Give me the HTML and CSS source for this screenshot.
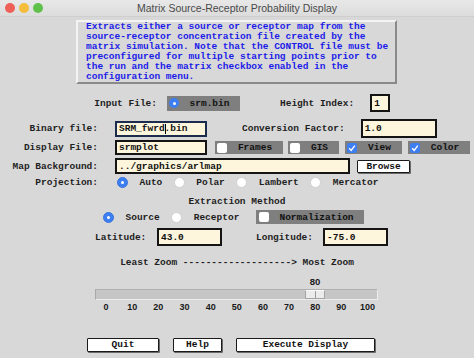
FILE: index.html
```html
<!DOCTYPE html>
<html lang="en">
<head>
    <meta charset="UTF-8">
    <title>Matrix Source-Receptor Probability Display</title>
    <link rel="stylesheet" href="styles.css">
</head>
<body>
    <div class="titlebar">
        <div class="lights">
            <span class="light red"></span>
            <span class="light yellow"></span>
            <span class="light green"></span>
        </div>
        <div class="title">Matrix Source-Receptor Probability Display</div>
    </div>

    <div class="window">
        <div class="desc">Extracts either a source or receptor map from the<br>source-receptor concentration file created by the<br>matrix simulation. Note that the CONTROL file must be<br>preconfigured for multiple starting points prior to<br>the run and the matrix checkbox enabled in the<br>configuration menu.</div>

        <div class="row row-input">
            <span class="lbl lbl-input">Input File:</span>
            <div class="pick pick-srm"><span class="radio on"></span><span class="pick-text">srm.bin</span></div>
            <span class="lbl-height">Height Index:</span>
            <div class="entry entry-height">1</div>
        </div>

        <div class="row row-binary">
            <span class="lbl">Binary file:</span>
            <div class="entry entry-file focus">SRM_fwrd<span class="caret"></span>.bin</div>
            <span class="lbl-conv">Conversion Factor:</span>
            <div class="entry entry-conv">1.0</div>
        </div>

        <div class="row row-display">
            <span class="lbl">Display File:</span>
            <div class="entry entry-file entry-display">srmplot</div>
            <div class="pick pick-frames"><span class="check"></span><span class="pick-text">Frames</span></div>
            <div class="pick pick-gis"><span class="check"></span><span class="pick-text">GIS</span></div>
            <div class="pick pick-view"><span class="check on"><svg width="10" height="10" viewBox="0 0 10 10"><polyline points="2.2,5.2 4.2,7.4 7.8,2.6" fill="none" stroke="#fff" stroke-width="1.4"/></svg></span><span class="pick-text">View</span></div>
            <div class="pick pick-color"><span class="check on"><svg width="10" height="10" viewBox="0 0 10 10"><polyline points="2.2,5.2 4.2,7.4 7.8,2.6" fill="none" stroke="#fff" stroke-width="1.4"/></svg></span><span class="pick-text">Color</span></div>
        </div>

        <div class="row row-map">
            <span class="lbl">Map Background:</span>
            <div class="entry entry-map">../graphics/arlmap</div>
            <button class="btn btn-browse">Browse</button>
        </div>

        <div class="row row-proj">
            <span class="lbl">Projection:</span>
            <span class="radio on first"></span><span class="opt-text">Auto</span>
            <span class="radio"></span><span class="opt-text">Polar</span>
            <span class="radio"></span><span class="opt-text">Lambert</span>
            <span class="radio"></span><span class="opt-text">Mercator</span>
        </div>

        <div class="row row-center row-method">Extraction Method</div>

        <div class="row row-source">
            <span class="radio on source"></span><span class="opt-text">Source</span>
            <span class="radio"></span><span class="opt-text">Receptor</span>
            <div class="pick pick-norm"><span class="check"></span><span class="pick-text">Normalization</span></div>
        </div>

        <div class="row row-latlon">
            <span class="lbl-lat">Latitude:</span>
            <div class="entry entry-lat">43.0</div>
            <span class="lbl-lon">Longitude:</span>
            <div class="entry entry-lon">-75.0</div>
        </div>

        <div class="row row-center row-zoom">Least Zoom -------------------&gt; Most Zoom</div>

        <div class="slider">
            <div class="slider-value">80</div>
            <div class="trough"><div class="thumb"></div></div>
            <div class="ticks">
                <span>0</span><span>10</span><span>20</span><span>30</span><span>40</span><span>50</span>
                <span>60</span><span>70</span><span>80</span><span>90</span><span>100</span>
            </div>
        </div>

        <div class="row row-buttons">
            <button class="btn btn-quit">Quit</button>
            <button class="btn btn-help">Help</button>
            <button class="btn btn-exec">Execute Display</button>
        </div>
    </div>
</body>
</html>
```

FILE: styles.css
```css
body {
    margin: 0;
    width: 474px;
    height: 358px;
    overflow: hidden;
    background-color: #d8d8d8;
    font-family: "Liberation Mono", monospace;
    font-weight: bold;
    font-size: 9.5px;
    color: #1e1e1e;
}

/* window title bar */
.titlebar {
    height: 17px;
    display: grid;
    grid-template-columns: 1fr auto 1fr;
    align-items: center;
    background: linear-gradient(#e8e8e8, #dcdcdc);
    border-bottom: 1px solid #cfcfcf;
    box-sizing: border-box;
}
.lights {
    display: flex;
    gap: 4px;
    padding-left: 5px;
}
.light {
    width: 10px;
    height: 10px;
    border-radius: 50%;
}
.red { background-color: #ee5f57; }
.yellow { background-color: #f4bd3b; }
.green { background-color: #5fc14a; }
.title {
    font-family: "Liberation Sans", sans-serif;
    font-weight: normal;
    font-size: 10.5px;
    color: #4a4a4a;
}

.window {
    display: flex;
    flex-direction: column;
}

.desc {
    margin: 3px 0 0 76px;
    width: 321px;
    height: 64px;
    box-sizing: border-box;
    padding-left: 8px;
    border: 2px solid;
    border-color: #f4f4f4 #8a8a8a #8a8a8a #f4f4f4;
    color: #1c1ce8;
    line-height: 10px;
    white-space: nowrap;
}

.row {
    display: flex;
    align-items: center;
    flex: none;
}
.row-center {
    justify-content: center;
}
.lbl {
    width: 98px;
    text-align: right;
    flex: none;
}

.entry {
    box-sizing: border-box;
    background-color: #fdf6dc;
    border: 2px solid #141414;
    padding-left: 2px;
    display: flex;
    align-items: center;
    flex: none;
    color: #111;
}
.entry.focus {
    border-color: #1d2b4c;
}
.caret {
    display: inline-block;
    width: 0;
    height: 10px;
    border-left: 1px solid #000;
    margin-right: -1px;
}

.pick {
    display: flex;
    align-items: center;
    background-color: #7f7f7f;
    padding-left: 2px;
    box-sizing: border-box;
    flex: none;
    color: #111;
}
.pick-text {
    flex: 1;
    text-align: center;
}
.check {
    width: 10px;
    height: 10px;
    border-radius: 2px;
    background-color: #fff;
    display: flex;
    flex: none;
}
.check.on {
    background-color: #3d7ef0;
}

.radio {
    width: 11px;
    height: 11px;
    border-radius: 50%;
    background-color: #fff;
    box-sizing: border-box;
    border: 1px solid #d0d0d0;
    flex: none;
    margin-left: 11.5px;
    display: flex;
    align-items: center;
    justify-content: center;
}
.radio.on {
    background-color: #3d7ef0;
    border-color: #3a74de;
}
.radio.on::after {
    content: "";
    width: 3px;
    height: 3px;
    border-radius: 50%;
    background-color: #fff;
}
.opt-text {
    margin-left: 11.5px;
}

/* input file row */
.row-input {
    margin-top: 9px;
    height: 20px;
}
.lbl-input {
    width: 157px;
}
.pick-srm {
    margin-left: 10px;
    width: 73px;
    height: 15px;
}
.pick-srm .radio {
    margin-left: 0;
    width: 10px;
    height: 10px;
    border: none;
}
.lbl-height {
    margin-left: 40px;
}
.entry-height {
    margin-left: 16px;
    width: 20px;
    height: 18px;
}

/* binary / conversion row */
.row-binary {
    margin-top: 6px;
    height: 19px;
}
.entry-file {
    margin-left: 17px;
    width: 92px;
    height: 16px;
}
.lbl-conv {
    margin-left: 35px;
}
.entry-conv {
    margin-left: 16px;
    width: 76px;
    height: 19px;
}

/* display file + toggles */
.row-display {
    margin-top: 2px;
    height: 15px;
}
.entry-display {
    height: 15px;
}
.pick-frames, .pick-gis, .pick-view, .pick-color {
    height: 13px;
}
.pick-frames { margin-left: 8px; width: 68px; }
.pick-gis { margin-left: 5px; width: 51px; }
.pick-view { margin-left: 6px; width: 57px; }
.pick-color { margin-left: 6px; width: 62px; }

/* map background */
.row-map {
    margin-top: 3px;
    height: 16px;
}
.entry-map {
    margin-left: 17px;
    width: 235px;
    height: 16px;
}

.btn {
    font-family: "Liberation Mono", monospace;
    font-weight: bold;
    font-size: 9.5px;
    color: #111;
    background-color: #fff;
    border: 1px solid #1a1a1a;
    border-radius: 1px;
    box-shadow: 1px 1px 0 #6a6a6a;
    padding: 0;
    height: 14px;
    line-height: 12px;
    flex: none;
}
.btn-browse {
    margin-left: 7px;
    width: 53px;
    height: 13px;
    line-height: 11px;
}

/* projection */
.row-proj {
    margin-top: 1px;
    height: 14px;
}
.radio.first {
    margin-left: 19px;
}

.row-method {
    margin-top: 5px;
    height: 14px;
}

/* extraction method */
.row-source {
    margin-top: 2px;
    height: 14px;
}
.radio.source {
    margin-left: 103px;
}
.pick-norm {
    margin-left: 16.7px;
    width: 108px;
    height: 14px;
    padding-left: 3px;
}

/* latitude / longitude */
.row-latlon {
    margin-top: 4px;
    height: 18px;
}
.lbl-lat {
    margin-left: 95px;
}
.entry-lat {
    margin-left: 10.7px;
    width: 65px;
    height: 18px;
}
.lbl-lon {
    margin-left: 34px;
}
.entry-lon {
    margin-left: 10px;
    width: 65px;
    height: 18px;
}

.row-zoom {
    margin-top: 9px;
    height: 14px;
}

/* zoom slider */
.slider {
    margin-top: 7px;
    display: flex;
    flex-direction: column;
    font-family: "Liberation Sans", sans-serif;
    font-weight: bold;
    color: #1a1a1a;
}
.slider-value {
    margin-left: 305px;
    width: 20px;
    height: 12px;
    line-height: 12px;
    text-align: center;
    font-size: 9.5px;
}
.trough {
    margin: 1px 0 0 95px;
    width: 283px;
    height: 11px;
    box-sizing: border-box;
    background-color: #c6c6c6;
    border-top: 1px solid #b0b0b0;
    border-left: 1px solid #a8a8a8;
    border-bottom: 1px solid #ededed;
    border-right: 1px solid #ededed;
    display: flex;
}
.thumb {
    margin-left: 209px;
    width: 20px;
    height: 100%;
    box-sizing: border-box;
    background: linear-gradient(to right, #ececec 0, #ececec 9px, #9a9a9a 9px, #9a9a9a 10px, #ececec 10px);
    border: 1px solid #a4a4a4;
    border-top-color: #fafafa;
}
.ticks {
    margin: 2px 0 0 93px;
    display: grid;
    grid-template-columns: repeat(11, 26.15px);
    height: 10px;
    line-height: 10px;
    font-size: 9px;
}
.ticks span {
    text-align: center;
}

/* bottom buttons */
.row-buttons {
    margin-top: 26px;
    height: 14px;
}
.btn-quit { margin-left: 87px; width: 72px; }
.btn-help { margin-left: 14px; width: 49px; }
.btn-exec { margin-left: 14px; width: 139px; }
```
